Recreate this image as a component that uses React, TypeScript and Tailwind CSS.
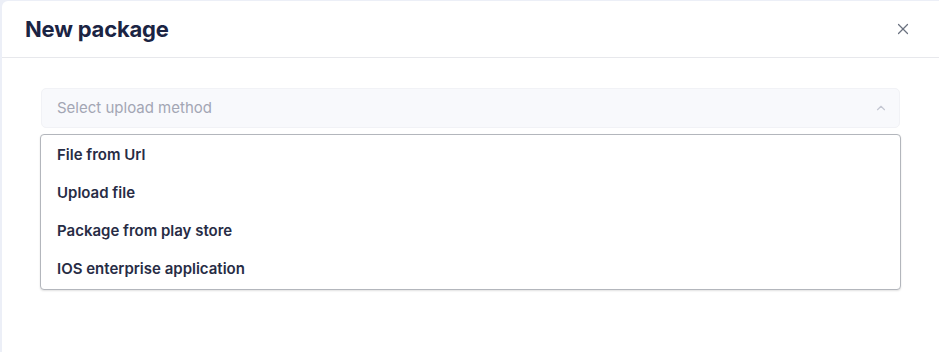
import { ChevronUp, X } from "lucide-react";

const methods = [
  "File from Url",
  "Upload file",
  "Package from play store",
  "IOS enterprise application",
];

export default function App() {
  return (
    <div
      className="h-[352px] w-[939px] overflow-hidden bg-[#eceff7] pl-[2px] pt-[1px]"
      style={{ fontFamily: "Inter, 'Noto Sans', sans-serif" }}
    >
      <div className="h-full rounded-tl-md bg-white">
        <header className="flex h-[57px] items-center justify-between border-b border-[#e7e8ec] pl-[23px] pr-[27px]">
          <h1 className="text-[22px] font-bold tracking-[-0.2px] text-[#1b2443]">New package</h1>
          <button className="text-[#6b7280]" aria-label="Close">
            <X className="h-[18px] w-[18px]" strokeWidth={1.6} />
          </button>
        </header>

        <div className="px-[38px] pt-[30px]">
          <div className="mx-[1px] flex h-[40px] items-center justify-between rounded-[5px] border border-[#f1f2f6] bg-[#f8f9fc] pl-[15px] pr-[11px]">
            <span className="text-[15px] text-[#a3a6b4]">Select upload method</span>
            <ChevronUp className="h-[14px] w-[14px] text-[#c4c7d2]" strokeWidth={2} />
          </div>

          <ul className="mt-[6px] rounded-[4px] border-[1.5px] border-[#b3b6bc] bg-white py-[1px] shadow-[0_1px_2px_rgba(0,0,0,0.12)]">
            {methods.map((m) => (
              <li
                key={m}
                className="flex h-[38px] items-center px-[16px] text-[15px] font-semibold text-[#272c45]"
              >
                {m}
              </li>
            ))}
          </ul>
        </div>
      </div>
    </div>
  );
}
